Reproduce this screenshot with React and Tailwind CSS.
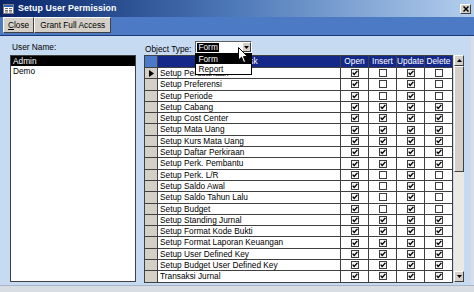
import React from 'react';

const rows = [
  ['Setup Perusahaan', [1, 0, 1, 0]],
  ['Setup Preferensi', [1, 0, 1, 0]],
  ['Setup Periode', [1, 0, 1, 0]],
  ['Setup Cabang', [1, 1, 1, 1]],
  ['Setup Cost Center', [1, 1, 1, 1]],
  ['Setup Mata Uang', [1, 1, 1, 1]],
  ['Setup Kurs Mata Uang', [1, 1, 1, 1]],
  ['Setup Daftar Perkiraan', [1, 1, 1, 1]],
  ['Setup Perk. Pembantu', [1, 1, 1, 1]],
  ['Setup Perk. L/R', [1, 0, 1, 0]],
  ['Setup Saldo Awal', [1, 0, 1, 0]],
  ['Setup Saldo Tahun Lalu', [1, 0, 1, 0]],
  ['Setup Budget', [1, 0, 1, 0]],
  ['Setup Standing Jurnal', [1, 1, 1, 1]],
  ['Setup Format Kode Bukti', [1, 1, 1, 1]],
  ['Setup Format Laporan Keuangan', [1, 1, 1, 1]],
  ['Setup User Defined Key', [1, 1, 1, 1]],
  ['Setup Budget User Defined Key', [1, 1, 1, 1]],
  ['Transaksi Jurnal', [1, 1, 1, 1]],
];

const font = { fontFamily: '"Liberation Sans", Arial, sans-serif' };

function Check({ on }) {
  return (
    <svg width="8" height="8" viewBox="0 0 8 8">
      <rect x="0.5" y="0.5" width="7" height="7" fill={on ? '#f4f4f4' : '#fff'} stroke="#3c3c3c" />
      {on ? <path d="M1.7 3.6 L3.2 5.4 L6.4 1.9" fill="none" stroke="#000" strokeWidth="1.4" /> : null}
    </svg>
  );
}

const bevel = 'border border-t-white border-l-white border-r-[#404040] border-b-[#404040]';

export default function App() {
  return (
    <div className="w-[474px] h-[292px] overflow-hidden flex flex-col bg-[#c6daf2] text-[8.3px] text-black" style={font}>
      {/* Title bar */}
      <div className="h-[17px] flex items-center bg-gradient-to-r from-[#0a246a] via-[#4f7ab8] to-[#b4cfee] pl-[3px] pr-[3px]">
        <svg width="11" height="10" viewBox="0 0 11 10" className="mr-[4px]">
          <rect x="0.5" y="0.5" width="10" height="9" fill="#fff" stroke="#808080" />
          <rect x="1" y="1" width="9" height="2" fill="#2a5cb8" />
          <path d="M2 4.5h3M2 6.5h3M2 8h3M6 4.5h3M6 6.5h3M6 8h3" stroke="#404040" strokeWidth="0.8" />
        </svg>
        <span className="text-white font-bold text-[8.8px] tracking-[0.1px]">Setup User Permission</span>
        <div className="flex-1" />
        <div className={`w-[11px] h-[10px] bg-[#d4d0c8] ${bevel} flex items-center justify-center`}>
          <svg width="6" height="6" viewBox="0 0 6 6">
            <path d="M0.5 0.5 L5.5 5.5 M5.5 0.5 L0.5 5.5" stroke="#000" strokeWidth="1.5" />
          </svg>
        </div>
      </div>

      {/* Toolbar */}
      <div className="h-[19px] flex items-start bg-[#4c7ac4] border-b border-[#1c3a78] pl-[3px]">
        <div className="h-[16px] flex bg-[#d4d0c8]">
          <button className={`h-full px-[4px] ${bevel} flex items-center`}>
            <span><span className="underline">C</span>lose</span>
          </button>
          <button className={`h-full px-[5px] ${bevel} flex items-center`}>Grant Full Access</button>
        </div>
      </div>

      {/* Body */}
      <div className="flex-1 flex pl-[10px] pt-[5px] border-r-[3px] border-[#d8dde6]">
        {/* Users */}
        <div className="w-[126px] flex flex-col">
          <div className="h-[14px] flex items-center pl-[2px] pb-[1px]">User Name:</div>
          <div className="h-[227px] bg-white border border-[#404040] flex flex-col">
            <div className="h-[10px] bg-black text-white pl-[2px] leading-[10px]">Admin</div>
            <div className="h-[10px] pl-[2px] leading-[10px]">Demo</div>
          </div>
        </div>

        {/* Permissions */}
        <div className="ml-[8px] flex flex-col">
          <div className="h-[14px] flex items-start pt-0 relative z-10">
            <span className="pl-[1px] pt-[2px]">Object Type:</span>
            <div className="ml-[4px] relative w-[57px] h-[12px] bg-white border border-t-[#606060] border-l-[#606060] border-r-white border-b-white flex items-center">
              <span className="ml-[1px] bg-black text-white px-[1px] leading-[9px]">Form</span>
              <div className="flex-1" />
              <div className={`w-[9px] h-full bg-[#d4d0c8] ${bevel} flex items-center justify-center`}>
                <svg width="5" height="3" viewBox="0 0 5 3"><path d="M0 0h5L2.5 3z" fill="#000" /></svg>
              </div>
              {/* Dropdown list */}
              <div className="absolute left-[-1px] top-[11px] w-[57px] bg-white border border-black flex flex-col">
                <div className="h-[10px] bg-black text-white pl-[2px] leading-[10px]">Form</div>
                <div className="h-[10px] pl-[2px] leading-[10px]">Report</div>
              </div>
              {/* Mouse cursor */}
              <svg className="absolute left-[42px] top-[5px]" width="11" height="17" viewBox="0 0 11 17">
                <path d="M0.5 0.5 L0.5 13 L3.5 10.2 L5.6 15.5 L7.6 14.6 L5.5 9.6 L9.5 9.6 Z" fill="#fff" stroke="#000" strokeWidth="1" strokeLinejoin="round" />
              </svg>
            </div>
          </div>

          <div className="flex">
            {/* Datasheet */}
            <div className="w-[309px] border-l border-t border-[#404040] bg-white">
              <div className="grid grid-cols-[13px_183px_28px_28px_28px_28px] h-[12px]">
                <div className="bg-[#4a7ac8] border-r border-b border-[#404040]" />
                <div className="bg-[#14288a] border-r border-b border-[#404040] text-white text-center leading-[11px]">Task</div>
                {['Open', 'Insert', 'Update', 'Delete'].map((h) => (
                  <div key={h} className="bg-[#14288a] border-r border-b border-[#404040] text-white text-center leading-[11px]">{h}</div>
                ))}
              </div>
              {rows.map(([name, perms], i) => (
                <div key={name} className="grid grid-cols-[13px_183px_28px_28px_28px_28px] h-[11.3px]">
                  <div className="bg-[#d4d0c8] border-r border-b border-[#404040] flex items-center justify-center">
                    {i === 0 ? (
                      <svg width="5" height="7" viewBox="0 0 5 7"><path d="M0 0L5 3.5L0 7z" fill="#000" /></svg>
                    ) : null}
                  </div>
                  <div className="border-r border-b border-[#404040] pl-[2px] leading-[10px] whitespace-nowrap overflow-hidden">{name}</div>
                  {perms.map((p, j) => (
                    <div key={j} className="border-r border-b border-[#404040] flex items-center justify-center">
                      <Check on={p === 1} />
                    </div>
                  ))}
                </div>
              ))}
            </div>

            {/* Scrollbar */}
            <div className="ml-[1px] w-[10px] h-[227px] bg-[#ebe9e4] flex flex-col">
              <div className={`h-[11px] bg-[#d4d0c8] ${bevel} flex items-center justify-center`}>
                <svg width="5" height="3" viewBox="0 0 5 3"><path d="M0 3h5L2.5 0z" fill="#000" /></svg>
              </div>
              <div className={`h-[106px] bg-[#d4d0c8] ${bevel}`} />
              <div className="flex-1" />
              <div className={`h-[11px] bg-[#d4d0c8] ${bevel} flex items-center justify-center`}>
                <svg width="5" height="3" viewBox="0 0 5 3"><path d="M0 0h5L2.5 3z" fill="#000" /></svg>
              </div>
            </div>
          </div>
        </div>
      </div>

      {/* Bottom frame */}
      <div className="h-[7px] bg-[#d8dce3] border-t border-[#aab6c8]" />
    </div>
  );
}
